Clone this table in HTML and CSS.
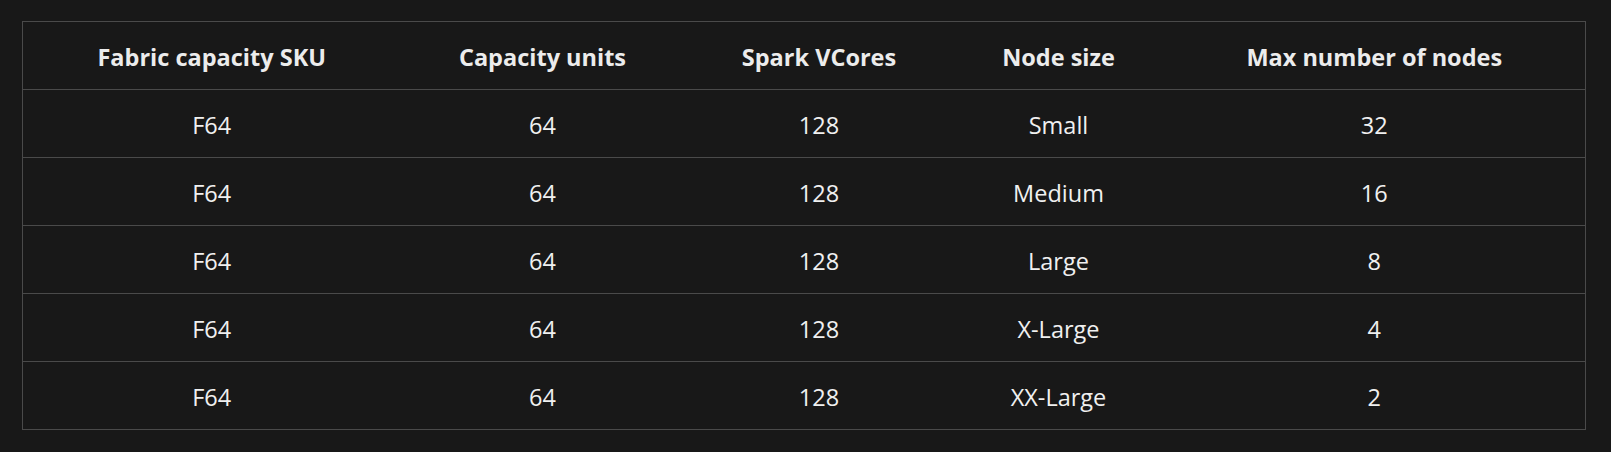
FILE: index.html
```html
<!DOCTYPE html>
<html lang="en">
<head>
<meta charset="utf-8">
<title>Fabric capacity SKU</title>
<link rel="stylesheet" href="styles.css">
</head>
<body>
<table class="sku-table">
  <colgroup>
    <col class="c1"><col class="c2"><col class="c3"><col class="c4"><col class="c5">
  </colgroup>
  <thead>
    <tr><th>Fabric capacity SKU</th><th>Capacity units</th><th>Spark VCores</th><th>Node size</th><th>Max number of nodes</th></tr>
  </thead>
  <tbody>
    <tr><td>F64</td><td>64</td><td>128</td><td>Small</td><td>32</td></tr>
    <tr><td>F64</td><td>64</td><td>128</td><td>Medium</td><td>16</td></tr>
    <tr><td>F64</td><td>64</td><td>128</td><td>Large</td><td>8</td></tr>
    <tr><td>F64</td><td>64</td><td>128</td><td>X-Large</td><td>4</td></tr>
    <tr><td>F64</td><td>64</td><td>128</td><td>XX-Large</td><td>2</td></tr>
  </tbody>
</table>
</body>
</html>
```
FILE: styles.css
```css
html, body {
  margin: 0;
  background: #181818;
}
body {
  padding: 21px 26px 0 22px;
  font-family: "Open Sans", "Noto Sans", sans-serif;
  color: #e8e8e8;
}
.sku-table {
  width: 1563px;
  border-collapse: collapse;
  table-layout: fixed;
  border: 1px solid #4a4a4a;
}
.c1 { width: 378px; }
.c2 { width: 284px; }
.c3 { width: 269px; }
.c4 { width: 210px; }
.c5 { width: 422px; }
.sku-table th,
.sku-table td {
  height: 68px;
  padding: 0 8px;
  box-sizing: border-box;
  text-align: center;
  vertical-align: middle;
  font-size: 23.5px;
  line-height: 32px;
  border-top: 1px solid #4a4a4a;
}
.sku-table th {
  font-weight: 700;
  color: #ececec;
  padding-top: 3px;
}
.sku-table td {
  font-weight: 400;
  color: #f0f0f0;
  padding-top: 3px;
}
```
